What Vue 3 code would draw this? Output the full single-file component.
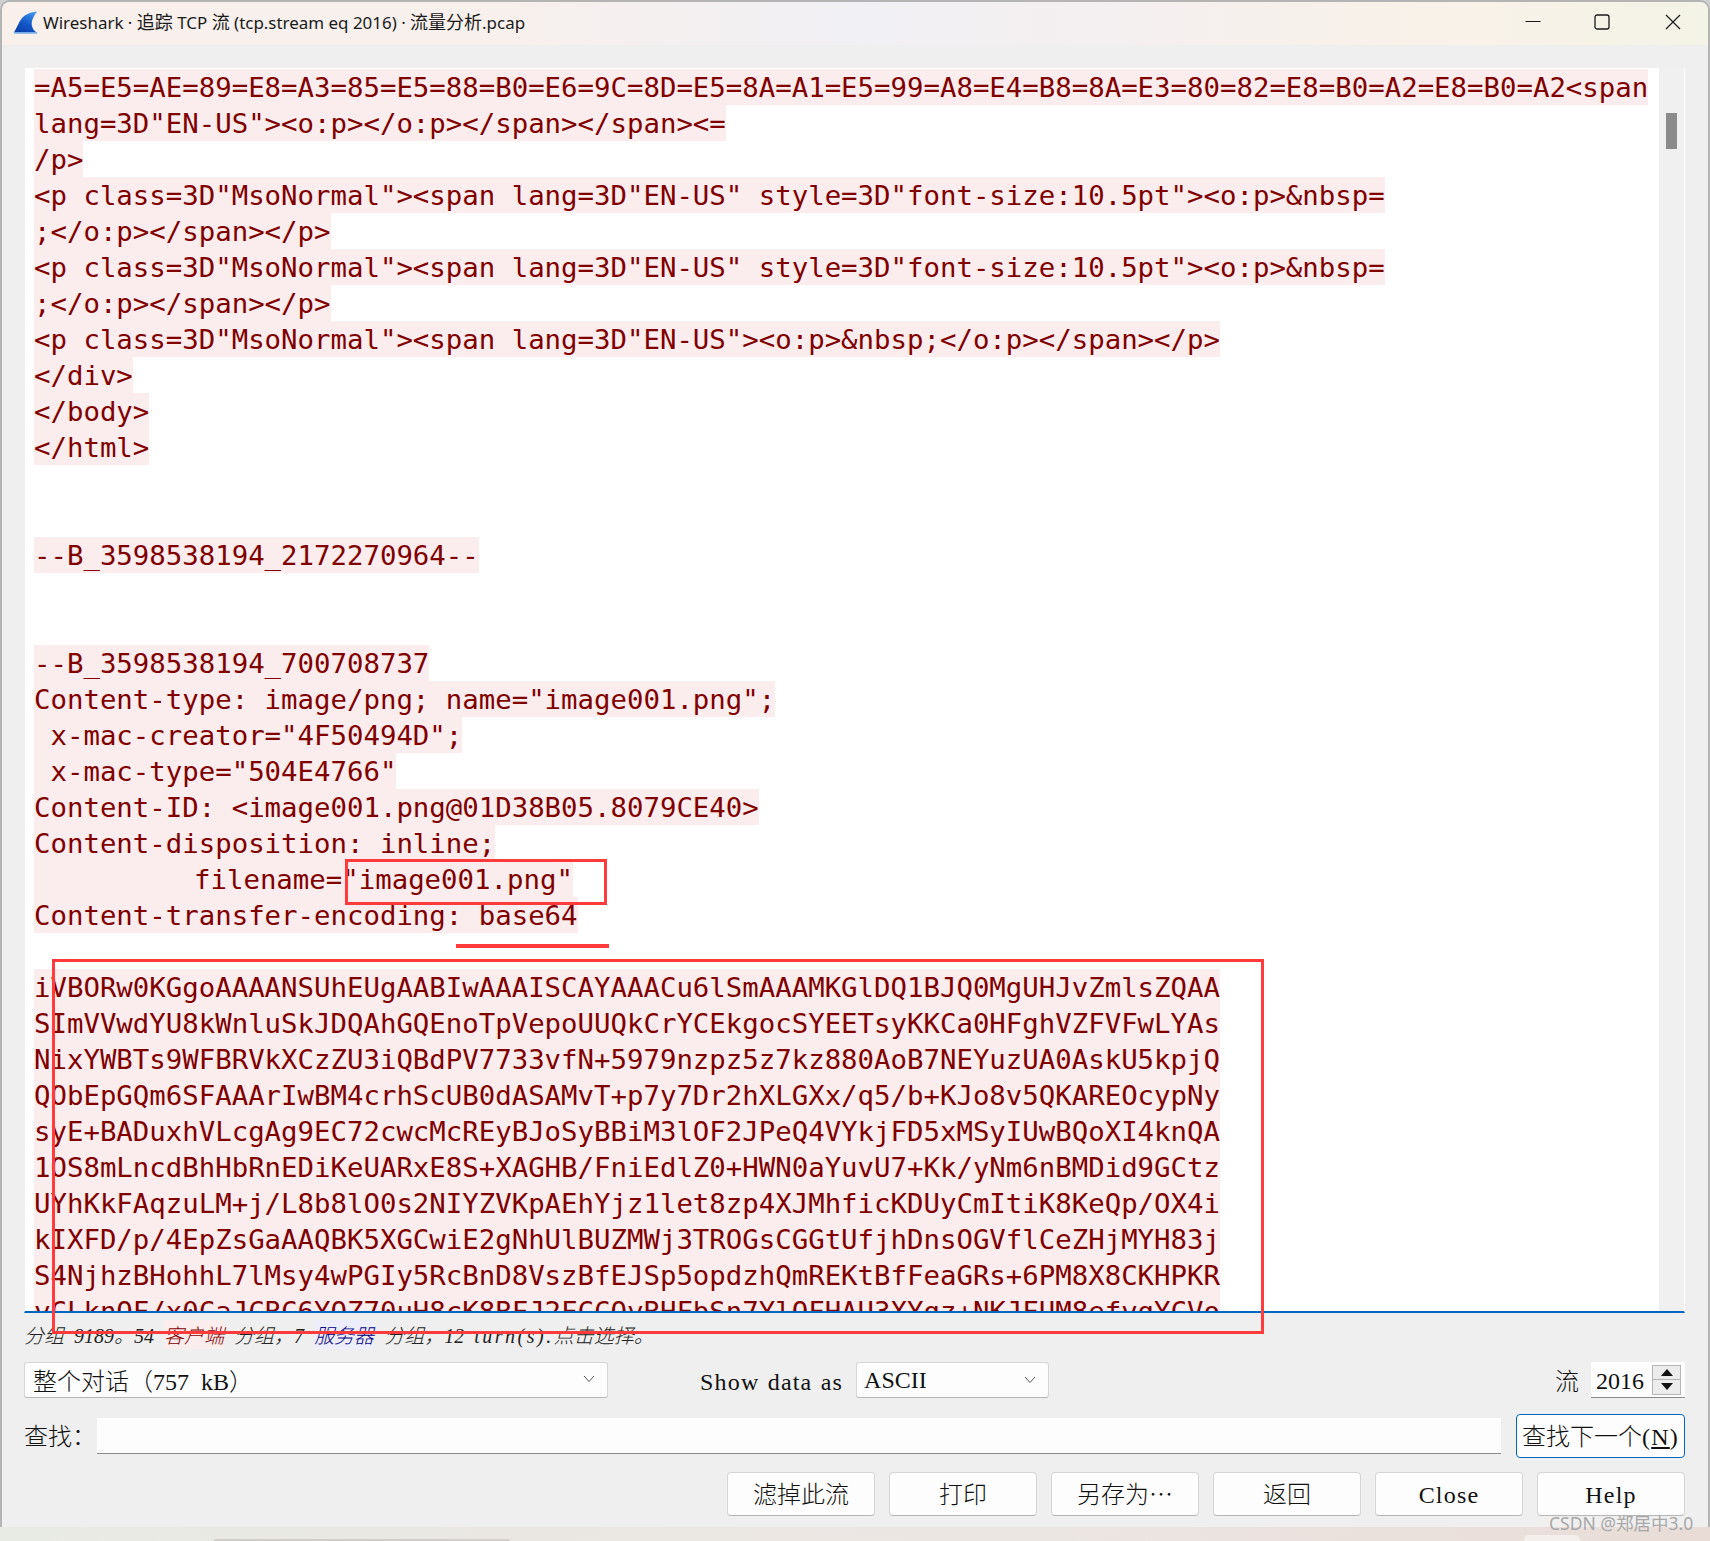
<script setup>
const nb3 = '<p class=3D"MsoNormal"><span lang=3D"EN-US" style=3D"font-size:10.5pt"><o:p>&nbsp='
const lines = [
  '=A5=E5=AE=89=E8=A3=85=E5=88=B0=E6=9C=8D=E5=8A=A1=E5=99=A8=E4=B8=8A=E3=80=82=E8=B0=A2=E8=B0=A2<span',
  'lang=3D"EN-US"><o:p></o:p></span></span><=',
  '/p>',
  nb3,
  ';</o:p></span></p>',
  nb3,
  ';</o:p></span></p>',
  '<p class=3D"MsoNormal"><span lang=3D"EN-US"><o:p>&nbsp;</o:p></span></p>',
  '</div>',
  '</body>',
  '</html>',
  '',
  '',
  '--B_3598538194_2172270964--',
  '',
  '',
  '--B_3598538194_700708737',
  'Content-type: image/png; name="image001.png";',
  ' x-mac-creator="4F50494D";',
  ' x-mac-type="504E4766"',
  'Content-ID: <image001.png@01D38B05.8079CE40>',
  'Content-disposition: inline;',
  '\tfilename="image001.png"',
  'Content-transfer-encoding: base64',
  '',
  'iVBORw0KGgoAAAANSUhEUgAABIwAAAISCAYAAACu6lSmAAAMKGlDQ1BJQ0MgUHJvZmlsZQAA',
  'SImVVwdYU8kWnluSkJDQAhGQEnoTpVepoUUQkCrYCEkgocSYEETsyKKCa0HFghVZFVFwLYAs',
  'NixYWBTs9WFBRVkXCzZU3iQBdPV7733vfN+5979nzpz5z7kz880AoB7NEYuzUA0AskU5kpjQ',
  'QObEpGQm6SFAAArIwBM4crhScUB0dASAMvT+p7y7Dr2hXLGXx/q5/b+KJo8v5QKAREOcypNy',
  'syE+BADuxhVLcgAg9EC72cwcMcREyBJoSyBBiM3lOF2JPeQ4VYkjFD5xMSyIUwBQoXI4knQA',
  '1OS8mLncdBhHbRnEDiKeUARxE8S+XAGHB/FniEdlZ0+HWN0aYuvU7+Kk/yNm6nBMDid9GCtz',
  'UYhKkFAqzuLM+j/L8b8lO0s2NIYZVKpAEhYjz1let8zp4XJMhficKDUyCmItiK8KeQp/OX4i',
  'kIXFD/p/4EpZsGaAAQBK5XGCwiE2gNhUlBUZMWj3TROGsCGGtUfjhDnsOGVflCeZHjMYH83j',
  'S4NjhzBHohhL7lMsy4wPGIy5RcBnD8VszBfEJSp5opdzhQmREKtBfFeaGRs+6PM8X8CKHPKR',
  'yCLknOF/x0CaJCBC6YOZ70uH8cK8BFJ2FCCOyBHFbSn7YlOFHAU3XYgz+NKJFUM8efvgYCVo'
]
const rows = lines.map((t) => ({
  tab: t.startsWith('\t'),
  text: t.replace('\t', '')
}))
</script>

<template>
  <div class="root">
    <div class="window">
      <header class="titlebar">
        <svg class="logo" width="26" height="26" viewBox="0 0 26 26">
          <defs>
            <linearGradient id="fin" x1="0.75" y1="0" x2="0.25" y2="1">
              <stop offset="0" stop-color="#3f93ee" />
              <stop offset="0.55" stop-color="#1358c8" />
              <stop offset="1" stop-color="#0c40a8" />
            </linearGradient>
          </defs>
          <path d="M0 22.5 C3 17 5 12 7 9.5 C10 5 15 2.5 23 1.5 C19 7 17 12 18 16 C18.5 18.5 20 21 23 22.5 Z" fill="url(#fin)" />
          <path d="M0 22 H23 L23.2 23.8 H0 Z" fill="#79ade8" />
        </svg>
        <span class="title">Wireshark · <span class="cj">追踪</span> TCP <span class="cj">流</span> (tcp.stream eq 2016) · <span class="cj">流量分析</span>.pcap</span>
        <div class="controls">
          <svg width="16" height="16" viewBox="0 0 16 16"><path d="M0.5 7.5 H15.5" stroke="#1a1a1a" stroke-width="1.2" fill="none" /></svg>
          <svg width="16" height="16" viewBox="0 0 16 16"><rect x="1" y="1" width="14" height="14" rx="2" stroke="#1a1a1a" stroke-width="1.3" fill="none" /></svg>
          <svg width="16" height="16" viewBox="0 0 16 16"><path d="M1 1 L15 15 M15 1 L1 15" stroke="#1a1a1a" stroke-width="1.2" fill="none" /></svg>
        </div>
      </header>

      <main class="content">
        <section class="pane">
          <div class="stream">
            <div v-for="(row, i) in rows" :key="i" class="row">
              <span v-if="row.text" class="client"><span v-if="row.tab" class="tab"></span>{{ row.text }}</span>
            </div>
          </div>
          <div class="scrollbar"><div class="thumb"></div></div>
        </section>

        <div class="status">分组 <i class="n">9189</i>。<i class="n">54</i> <span class="c">客户端</span> 分组，<i class="n">7</i> <span class="s">服务器</span> 分组，<i class="n">12</i> <span class="m turn">turn(s).</span>点击选择。</div>

        <div class="options">
          <div class="combo wide"><span>整个对话（<span class="n">757</span> <span class="n">kB</span>）</span><svg class="chev" width="12" height="8" viewBox="0 0 12 8"><path d="M1 1 L6 6.5 L11 1" stroke="#555" stroke-width="1" fill="none" /></svg></div>
          <span class="m show">Show data as</span>
          <div class="combo narrow"><span class="m ascii">ASCII</span><svg class="chev" width="12" height="8" viewBox="0 0 12 8"><path d="M1 1 L6 6.5 L11 1" stroke="#555" stroke-width="1" fill="none" /></svg></div>
          <span class="stream-label">流</span>
          <div class="spin">
            <span class="n spin-value">2016</span>
            <div class="spin-btns">
              <div class="sb"><svg width="12" height="7" viewBox="0 0 12 7"><path d="M6 0 L12 7 H0 Z" fill="#111" /></svg></div>
              <div class="sb"><svg width="12" height="7" viewBox="0 0 12 7"><path d="M0 0 H12 L6 7 Z" fill="#111" /></svg></div>
            </div>
          </div>
        </div>

        <div class="find">
          <span class="find-label">查找：</span>
          <div class="input"></div>
          <button class="btn primary">查找下一个<span class="m">(<u>N</u>)</span></button>
        </div>

        <div class="actions">
          <button class="btn">滤掉此流</button>
          <button class="btn">打印</button>
          <button class="btn">另存为…</button>
          <button class="btn">返回</button>
          <button class="btn"><span class="m">Close</span></button>
          <button class="btn"><span class="m">Help</span></button>
        </div>
      </main>
    </div>
    <div class="strip"></div>

    <div class="mark box-a"></div>
    <div class="mark line-a"></div>
    <div class="mark box-b"></div>
    <div class="peek-a"></div>
    <div class="peek-b"></div>
    <div class="watermark">CSDN @郑居中3.0</div>
  </div>
</template>

<style>
html, body { margin: 0; background: #efefef; }
</style>

<style scoped>
.root {
  position: relative;
  width: 1710px;
  height: 1541px;
  overflow: hidden;
  display: flex;
  flex-direction: column;
  font-family: "Noto Sans CJK SC", sans-serif;
  color: #111;
  background: #cfcfcf;
}
.window {
  height: 1527px;
  box-sizing: border-box;
  border: 2px solid #b4b4b4;
  border-bottom: 0;
  border-radius: 10px 10px 0 0;
  background: #efefef;
  display: flex;
  flex-direction: column;
  overflow: hidden;
}
.titlebar {
  height: 43px;
  flex: none;
  box-sizing: border-box;
  display: flex;
  align-items: center;
  padding: 0 27px 3px 12px;
  background: linear-gradient(90deg, #f9f0ec 0%, #f7f0ed 30%, #f1f0f4 50%, #f4eff0 65%, #f9f2e8 85%, #f3f3e6 100%);
}
.logo { flex: none; margin-top: 1px; }
.title {
  margin-left: 3px;
  margin-bottom: 2px;
  font-family: "Noto Sans", "Noto Sans CJK SC", sans-serif;
  font-size: 16.95px;
  color: #1a1a1a;
  white-space: pre;
}
.cj {
  font-family: "Noto Sans CJK SC", sans-serif;
  font-size: 18px;
}
.controls {
  margin-left: auto;
  display: flex;
  gap: 55px;
  align-items: center;
}
.controls svg:first-child { margin-right: -2px; }
.content {
  flex: 1;
  display: flex;
  flex-direction: column;
  padding: 23px 23px 0 22px;
  min-height: 0;
}
.pane {
  height: 1245px;
  flex: none;
  box-sizing: border-box;
  display: flex;
  background: #fff;
  border-left: 1px solid #efefef;
  border-right: 1px solid #fff;
  border-bottom: 2px solid #0067c0;
  overflow: hidden;
}
.stream {
  flex: 1;
  min-width: 0;
  overflow: hidden;
  padding: 1px 0 0 9px;
  font-family: "DejaVu Sans Mono", monospace;
  font-size: 27.37px;
  line-height: 38px;
  color: #800000;
}
.row {
  height: 36px;
  white-space: pre;
}
.client {
  display: block;
  width: fit-content;
  height: 36px;
  background: #fbeced;
}
.tab {
  display: inline-block;
  width: 160px;
}
.scrollbar {
  width: 25px;
  flex: none;
  background: #f0f0f0;
}
.thumb {
  width: 11px;
  height: 36px;
  margin: 45px 0 0 7px;
  background: #8b8b8b;
}
.status {
  height: 49px;
  flex: none;
  box-sizing: border-box;
  padding-top: 8px;
  font-size: 20px;
  line-height: 28px;
  font-style: italic;
  font-weight: 300;
  word-spacing: 5.6px;
  white-space: pre;
  color: #222;
}
.status i { font-style: italic; }
.c { color: #800000; background: #fbeced; }
.s { color: #000080; background: #ededfb; }
.n { font-family: "Liberation Serif", serif; }
.m { font-family: "Liberation Serif", serif; letter-spacing: 0.05em; }
.turn { letter-spacing: 2.5px; }
.options {
  height: 36px;
  flex: none;
  display: flex;
  align-items: center;
  font-size: 24px;
  font-weight: 300;
  white-space: pre;
}
.combo {
  height: 36px;
  box-sizing: border-box;
  display: flex;
  align-items: center;
  justify-content: space-between;
  background: #fdfdfd;
  border: 1px solid #d6d6d6;
  border-bottom-color: #b5b5b5;
  border-radius: 3px;
}
.wide { width: 584px; padding: 0 12px 2px 8px; word-spacing: 6.7px; }
.narrow { width: 193px; padding: 0 12px 0 7px; margin-left: 13px; }
.ascii { letter-spacing: 0; }
.show { margin-left: 92px; padding-top: 4px; letter-spacing: 1.2px; word-spacing: 1px; }
.stream-label { margin-left: auto; padding-bottom: 2px; }
.spin {
  width: 94px;
  height: 36px;
  margin-left: 12px;
  box-sizing: border-box;
  display: flex;
  align-items: center;
  justify-content: space-between;
  padding-left: 5px;
  padding-right: 4px;
  background: #fdfdfd;
  border-bottom: 1px solid #8a8a8a;
}
.spin-value { padding-top: 4px; }
.spin-btns {
  width: 29px;
  height: 30px;
  box-sizing: border-box;
  border: 1px solid #b5b5b5;
  background: #ececec;
  display: flex;
  flex-direction: column;
}
.sb {
  flex: 1;
  display: flex;
  align-items: center;
  justify-content: center;
}
.sb + .sb { border-top: 1px solid #b5b5b5; }
.find {
  height: 44px;
  flex: none;
  margin-top: 16px;
  display: flex;
  align-items: center;
  font-size: 24px;
  font-weight: 300;
}
.find-label { width: 73px; flex: none; padding-bottom: 3px; }
.input {
  flex: 1;
  height: 36px;
  box-sizing: border-box;
  background: #fdfdfd;
  border-bottom: 1px solid #8a8a8a;
}
.btn {
  width: 148px;
  height: 44px;
  flex: none;
  box-sizing: border-box;
  padding: 0 0 4px;
  background: #fdfdfd;
  border: 1px solid #d6d6d6;
  border-bottom-color: #b5b5b5;
  border-radius: 4px;
  font-family: inherit;
  font-size: 24px;
  font-weight: 300;
  color: #111;
  white-space: pre;
}
.primary {
  width: 169px;
  margin-left: 15px;
  border: 1px solid #0067c0;
}
.actions {
  height: 44px;
  flex: none;
  margin-top: 14px;
  display: flex;
  justify-content: flex-end;
  gap: 14px;
}
.strip {
  flex: 1;
  background: linear-gradient(90deg, #e8ebe4 0%, #eae7e3 30%, #ece6e3 60%, #e9dcd7 100%);
}
.mark {
  position: absolute;
  box-sizing: border-box;
  border: 3px solid #ff3b3b;
}
.box-a { left: 345px; top: 859px; width: 262px; height: 46px; }
.line-a { left: 456px; top: 944px; width: 153px; height: 4px; border-width: 4px 0 0; }
.box-b { left: 52px; top: 959px; width: 1212px; height: 375px; }
.peek-a {
  position: absolute;
  left: 1524px;
  top: 1535px;
  width: 56px;
  height: 6px;
  border-radius: 5px 5px 0 0;
  background: #f4efec;
}
.peek-b {
  position: absolute;
  left: 214px;
  top: 1539px;
  width: 296px;
  height: 2px;
  border-radius: 2px 2px 0 0;
  background: #d2cdca;
}
.watermark {
  position: absolute;
  left: 1549px;
  top: 1510px;
  font-family: "Noto Sans", "Noto Sans CJK SC", sans-serif;
  font-size: 17.5px;
  line-height: 26px;
  color: #a8a8a8;
  white-space: pre;
}
</style>
